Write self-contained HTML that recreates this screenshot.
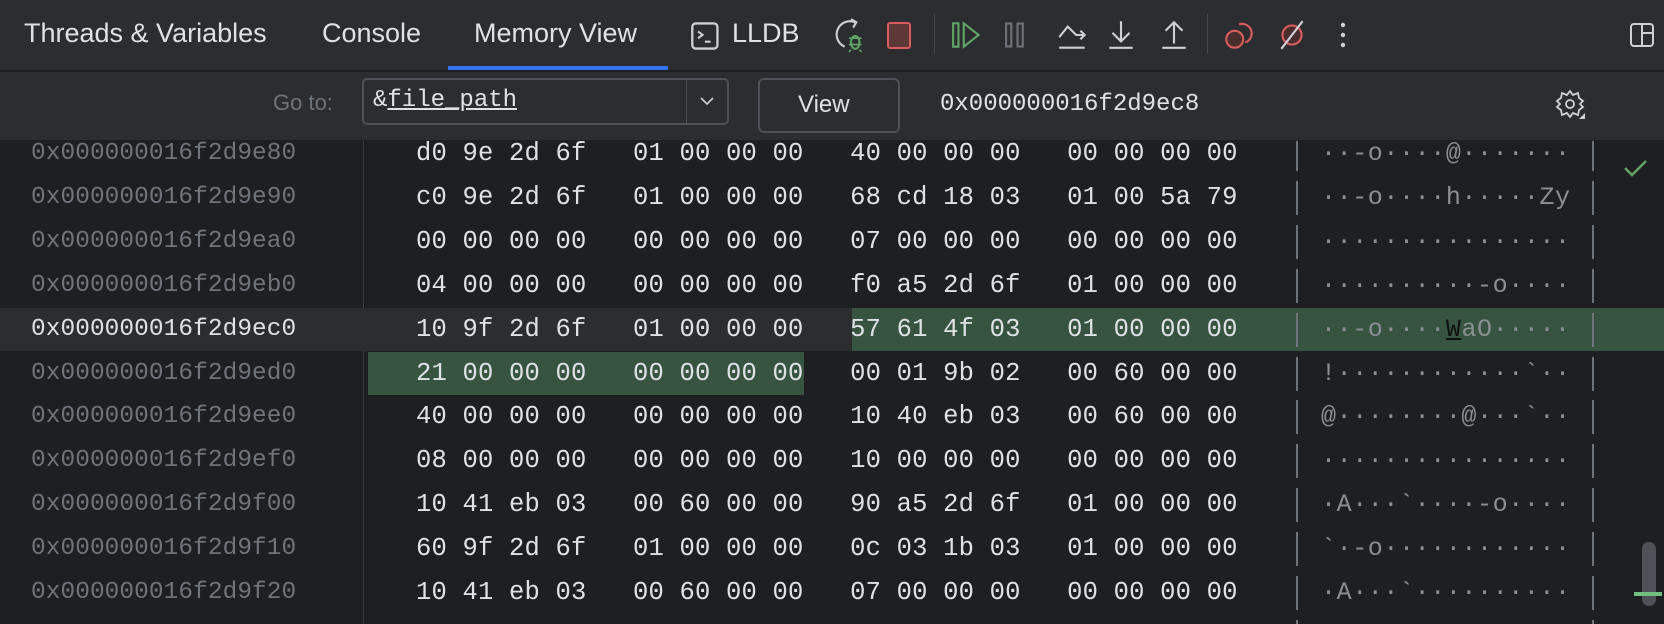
<!DOCTYPE html><html><head><meta charset="utf-8"><style>
*{margin:0;padding:0;box-sizing:border-box}
body{width:1664px;height:624px;background:#1e1f22;overflow:hidden;position:relative;font-family:"Liberation Sans",sans-serif;color:#dfe1e5}
.abs{position:absolute}
.tabs{left:0;top:0;width:1664px;height:72px;background:#2b2d30;border-bottom:2px solid #1e1f22}
.tab{position:absolute;top:18px;font-size:27px;color:#dfe1e5}
.tb{left:0;top:72px;width:1664px;height:69px;background:#2b2d30;border-bottom:1px solid #1e1f22}
.mono,.addr,.hex,.asc{font-family:"Liberation Mono",monospace}
.row{position:absolute;left:0;width:1664px;height:43.9px}
.addr{position:absolute;left:31px;top:0;line-height:43.9px;font-size:24.4px;letter-spacing:0.1px;color:#6f737a;white-space:pre}
.hex{position:absolute;left:416px;top:0;line-height:43.9px;font-size:25.5px;letter-spacing:0.2px;color:#dfe1e5;white-space:pre}
.asc{position:absolute;left:1321px;top:0;line-height:43.9px;font-size:25px;letter-spacing:0.6px;color:#8c8f94;white-space:pre}
.bar{position:absolute;top:5px;width:2px;height:34px;background:#6f737a}
</style></head><body>
<div class="abs" style="left:363px;top:141px;width:1px;height:483px;background:#393b40"></div>
<div class="abs" style="left:0;top:141px;width:1664px;height:483px;overflow:hidden">
<div class="row" style="top:-9px"><span class="addr">0x000000016f2d9e80</span><span class="hex">d0 9e 2d 6f   01 00 00 00   40 00 00 00   00 00 00 00</span><span class="bar" style="left:1296px"></span><span class="asc">··-o····@·······</span><span class="bar" style="left:1592px"></span></div>
<div class="row" style="top:34.9px"><span class="addr">0x000000016f2d9e90</span><span class="hex">c0 9e 2d 6f   01 00 00 00   68 cd 18 03   01 00 5a 79</span><span class="bar" style="left:1296px"></span><span class="asc">··-o····h·····Zy</span><span class="bar" style="left:1592px"></span></div>
<div class="row" style="top:78.8px"><span class="addr">0x000000016f2d9ea0</span><span class="hex">00 00 00 00   00 00 00 00   07 00 00 00   00 00 00 00</span><span class="bar" style="left:1296px"></span><span class="asc">················</span><span class="bar" style="left:1592px"></span></div>
<div class="row" style="top:122.7px"><span class="addr">0x000000016f2d9eb0</span><span class="hex">04 00 00 00   00 00 00 00   f0 a5 2d 6f   01 00 00 00</span><span class="bar" style="left:1296px"></span><span class="asc">··········-o····</span><span class="bar" style="left:1592px"></span></div>
<div class="row" style="top:166.6px;background:#2b2d30"><div class="abs" style="left:852px;top:0;width:812px;height:43.9px;background:#375441"></div><span class="addr" style="color:#dfe1e5">0x000000016f2d9ec0</span><span class="hex">10 9f 2d 6f   01 00 00 00   57 61 4f 03   01 00 00 00</span><span class="bar" style="left:1296px"></span><span class="asc">··-o····<u style="color:#111">W</u>aO·····</span><span class="bar" style="left:1592px"></span></div>
<div class="row" style="top:210.5px"><div class="abs" style="left:368px;top:0;width:436px;height:43.9px;background:#375441"></div><span class="addr">0x000000016f2d9ed0</span><span class="hex">21 00 00 00   00 00 00 00   00 01 9b 02   00 60 00 00</span><span class="bar" style="left:1296px"></span><span class="asc">!············`··</span><span class="bar" style="left:1592px"></span></div>
<div class="row" style="top:254.4px"><span class="addr">0x000000016f2d9ee0</span><span class="hex">40 00 00 00   00 00 00 00   10 40 eb 03   00 60 00 00</span><span class="bar" style="left:1296px"></span><span class="asc">@········@···`··</span><span class="bar" style="left:1592px"></span></div>
<div class="row" style="top:298.3px"><span class="addr">0x000000016f2d9ef0</span><span class="hex">08 00 00 00   00 00 00 00   10 00 00 00   00 00 00 00</span><span class="bar" style="left:1296px"></span><span class="asc">················</span><span class="bar" style="left:1592px"></span></div>
<div class="row" style="top:342.2px"><span class="addr">0x000000016f2d9f00</span><span class="hex">10 41 eb 03   00 60 00 00   90 a5 2d 6f   01 00 00 00</span><span class="bar" style="left:1296px"></span><span class="asc">·A···`····-o····</span><span class="bar" style="left:1592px"></span></div>
<div class="row" style="top:386.1px"><span class="addr">0x000000016f2d9f10</span><span class="hex">60 9f 2d 6f   01 00 00 00   0c 03 1b 03   01 00 00 00</span><span class="bar" style="left:1296px"></span><span class="asc">`·-o············</span><span class="bar" style="left:1592px"></span></div>
<div class="row" style="top:430px"><span class="addr">0x000000016f2d9f20</span><span class="hex">10 41 eb 03   00 60 00 00   07 00 00 00   00 00 00 00</span><span class="bar" style="left:1296px"></span><span class="asc">·A···`··········</span><span class="bar" style="left:1592px"></span></div>
<div class="row" style="top:473.9px"><span class="bar" style="left:1296px"></span><span class="bar" style="left:1592px"></span></div>
</div>
<svg class="abs" style="left:1622px;top:156px" width="28" height="24" viewBox="0 0 28 24"><path d="M3 12 L10 19 L24 5" fill="none" stroke="#5fa564" stroke-width="2.5"/></svg>
<div class="abs" style="left:1642px;top:542px;width:14px;height:64px;border-radius:7px;background:#4e5157"></div>
<div class="abs" style="left:1634px;top:592px;width:28px;height:4px;background:#6fbf7f"></div>

<div class="abs tabs">
<span class="tab" style="left:24px">Threads &amp; Variables</span>
<span class="tab" style="left:322px">Console</span>
<span class="tab" style="left:474px">Memory View</span>
<div class="abs" style="left:448px;top:66px;width:220px;height:4px;background:#3574f0"></div>
<svg class="abs" style="left:690px;top:20px" width="32" height="32" viewBox="0 0 28 28"><rect x="2" y="3" width="22" height="22" rx="3" fill="none" stroke="#ced0d6" stroke-width="2"/><path d="M7 10 L11 13 L7 16 M13 19 H18" fill="none" stroke="#ced0d6" stroke-width="1.8"/></svg>
<span class="tab" style="left:732px">LLDB</span>
<svg class="abs" style="left:834px;top:17px" width="34" height="36" viewBox="0 0 32 34"><path d="M20 5 A11 11 0 1 0 10 28" fill="none" stroke="#ced0d6" stroke-width="2"/><path d="M16 2 L21 5 L18 10" fill="none" stroke="#ced0d6" stroke-width="2"/><ellipse cx="20" cy="24" rx="4" ry="6" fill="none" stroke="#5fa564" stroke-width="2"/><path d="M14 20 H26 M14 26 H26 M16 31 L14 33 M24 31 L26 33" stroke="#5fa564" stroke-width="1.5"/></svg>
<div class="abs" style="left:887px;top:22px;width:24px;height:27px;border:2px solid #db5c5c;border-radius:3px;background:#5e3838"></div>
<div class="abs" style="left:934px;top:14px;width:1px;height:40px;background:#43454a"></div>
<svg class="abs" style="left:951px;top:20px" width="34" height="30" viewBox="0 0 32 28"><rect x="2" y="3" width="5" height="22" fill="none" stroke="#5fa564" stroke-width="2"/><path d="M12 3 L26 14 L12 25 Z" fill="none" stroke="#5fa564" stroke-width="2"/></svg>
<svg class="abs" style="left:1004px;top:20px" width="25" height="30" viewBox="0 0 24 28"><rect x="2" y="3" width="5" height="22" fill="none" stroke="#6f737a" stroke-width="2"/><rect x="13" y="3" width="5" height="22" fill="none" stroke="#6f737a" stroke-width="2"/></svg>
<svg class="abs" style="left:1055px;top:18px" width="36" height="34" viewBox="0 0 34 32"><path d="M4 18 L12 8 L20 16 L28 16 M24 12 L28 16 L24 20 M4 28 H28" fill="none" stroke="#ced0d6" stroke-width="2"/></svg>
<svg class="abs" style="left:1105px;top:18px" width="32" height="34" viewBox="0 0 30 32"><path d="M15 3 V22 M7 14 L15 22 L23 14 M4 28 H26" fill="none" stroke="#ced0d6" stroke-width="2"/></svg>
<svg class="abs" style="left:1158px;top:18px" width="32" height="34" viewBox="0 0 30 32"><path d="M15 24 V4 M7 12 L15 4 L23 12 M4 28 H26" fill="none" stroke="#ced0d6" stroke-width="2"/></svg>
<div class="abs" style="left:1207px;top:14px;width:1px;height:40px;background:#43454a"></div>
<svg class="abs" style="left:1222px;top:18px" width="36" height="34" viewBox="0 0 34 32"><circle cx="12" cy="20" r="8" fill="#4a2d2d" stroke="#db5c5c" stroke-width="2"/><path d="M16 6 A8 8 0 1 1 22 23" fill="none" stroke="#db5c5c" stroke-width="2"/></svg>
<svg class="abs" style="left:1275px;top:18px" width="34" height="34" viewBox="0 0 32 32"><circle cx="16" cy="16" r="9" fill="#4a2d2d" stroke="#db5c5c" stroke-width="2"/><path d="M6 29 L26 3" stroke="#ced0d6" stroke-width="2"/></svg>
<svg class="abs" style="left:1337px;top:18px" width="12" height="34" viewBox="0 0 12 32"><circle cx="6" cy="6" r="2.2" fill="#ced0d6"/><circle cx="6" cy="16" r="2.2" fill="#ced0d6"/><circle cx="6" cy="26" r="2.2" fill="#ced0d6"/></svg>
<svg class="abs" style="left:1628px;top:21px" width="28" height="28" viewBox="0 0 28 28"><rect x="3" y="3" width="22" height="22" rx="3" fill="none" stroke="#ced0d6" stroke-width="2"/><path d="M14 3 V25 M14 12 H25" stroke="#ced0d6" stroke-width="2"/></svg>
</div>

<div class="abs tb">
<span class="abs" style="left:273px;top:18px;font-size:22px;color:#6f737a">Go to:</span>
<div class="abs" style="left:362px;top:6px;width:367px;height:47px;border:2px solid #4e5157;border-radius:5px;background:#2b2d30"></div>
<div class="abs" style="left:686px;top:8px;width:1px;height:43px;background:#4e5157"></div>
<span class="abs mono" style="left:373px;top:15px;font-size:24px;color:#dfe1e5">&amp;<u>file_path</u></span>
<svg class="abs" style="left:698px;top:22px" width="18" height="14" viewBox="0 0 18 14"><path d="M3 4 L9 10 L15 4" fill="none" stroke="#ced0d6" stroke-width="1.6"/></svg>
<div class="abs" style="left:758px;top:6px;width:142px;height:55px;border:2px solid #4e5157;border-radius:6px"></div>
<span class="abs" style="left:798px;top:19px;font-size:24px;color:#dfe1e5">View</span>
<span class="abs mono" style="left:940px;top:19px;font-size:24px;color:#dfe1e5">0x000000016f2d9ec8</span>
<svg class="abs" style="left:1554px;top:16px" width="32" height="32" viewBox="0 0 32 32"><path d="M16 3 L19 7 L24 5 L25 10 L29 13 L26 16 L29 19 L25 22 L24 27 L19 25 L16 29 L13 25 L8 27 L7 22 L3 19 L6 16 L3 13 L7 10 L8 5 L13 7 Z" fill="none" stroke="#ced0d6" stroke-width="1.8"/><circle cx="16" cy="16" r="4" fill="none" stroke="#ced0d6" stroke-width="1.8"/><path d="M31 25 L31 31 L25 31 Z" fill="#ced0d6"/></svg>
</div>
</body></html>
